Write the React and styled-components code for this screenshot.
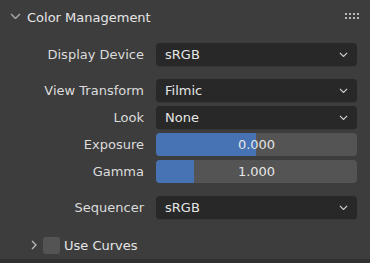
import styled, { createGlobalStyle } from "styled-components"

const Global = createGlobalStyle`
  body {
    margin: 0;
    background: #303030;
    font-family: "DejaVu Sans", "Liberation Sans", sans-serif;
    font-size: 13px;
  }
`

const Panel = styled.div`
  width: 370px;
  height: 259px;
  background: #3d3d3d;
  box-sizing: border-box;
`

const Header = styled.div`
  height: 32px;
  display: flex;
  align-items: center;
  padding-left: 10px;
  padding-right: 11px;
  color: #e6e6e6;
`

const HeaderTitle = styled.span`
  flex: 1;
  margin-left: 6px;
  padding-top: 2px;
`

const Body = styled.div`
  padding: 11px 13px 0 0;
`

const Group = styled.div`
  display: flex;
  flex-direction: column;
  gap: 4px;
  margin-bottom: 13px;
`

const Row = styled.div`
  display: flex;
  align-items: center;
  height: 23px;
`

const Label = styled.div`
  width: 144px;
  text-align: right;
  color: #dcdcdc;
  margin-right: 12px;
  white-space: nowrap;
`

const Dropdown = styled.div`
  flex: 1;
  height: 100%;
  background: #282828;
  border-radius: 4px;
  display: flex;
  align-items: center;
  padding: 0 9px 0 9px;
  color: #e6e6e6;
  box-shadow: 0 1px 0 #363636;
`

const DropText = styled.span`
  flex: 1;
`

const Slider = styled.div`
  position: relative;
  flex: 1;
  height: 100%;
  background: #545454;
  border-radius: 4px;
  overflow: hidden;
  display: flex;
  align-items: center;
  justify-content: center;
  color: #e6e6e6;
`

const Fill = styled.div`
  position: absolute;
  left: 0;
  top: 0;
  bottom: 0;
  background: #4772b3;
`

const SliderValue = styled.span`
  position: relative;
`

const SubHeader = styled.div`
  display: flex;
  align-items: center;
  height: 20px;
  padding-left: 31px;
  margin-top: 16px;
  color: #e6e6e6;
`

const Checkbox = styled.div`
  width: 17px;
  height: 17px;
  border-radius: 3px;
  background: #545454;
  margin-left: 6px;
  margin-right: 4px;
`

const ChevronDown = ({ size = 9, color = "#cfcfcf" }) => (
  <svg width={size} height={size * 0.6} viewBox="0 0 10 6">
    <path d="M1 1 L5 5 L9 1" fill="none" stroke={color} strokeWidth="1.3" />
  </svg>
)

const ChevronRight = () => (
  <svg width="6" height="10" viewBox="0 0 6 10">
    <path d="M1 1 L5 5 L1 9" fill="none" stroke="#bdbdbd" strokeWidth="1.3" />
  </svg>
)

const Grip = () => (
  <svg width="14" height="6" viewBox="0 0 14 6">
    {[0, 4, 8, 12].map((x) =>
      [0, 4].map((y) => (
        <rect key={x + "-" + y} x={x} y={y} width="2" height="2" fill="#b8b8b8" />
      ))
    )}
  </svg>
)

const Select = ({ label, value }) => (
  <Row>
    <Label>{label}</Label>
    <Dropdown>
      <DropText>{value}</DropText>
      <ChevronDown />
    </Dropdown>
  </Row>
)

const Number = ({ label, value, fraction }) => (
  <Row>
    <Label>{label}</Label>
    <Slider>
      <Fill style={{ width: `${fraction * 100}%` }} />
      <SliderValue>{value}</SliderValue>
    </Slider>
  </Row>
)

const App = () => {
  return (
    <>
      <Global />
      <Panel>
        <Header>
          <ChevronDown size={11} color="#a8a8a8" />
          <HeaderTitle>Color Management</HeaderTitle>
          <Grip />
        </Header>
        <Body>
          <Group>
            <Select label="Display Device" value="sRGB" />
          </Group>
          <Group>
            <Select label="View Transform" value="Filmic" />
            <Select label="Look" value="None" />
            <Number label="Exposure" value="0.000" fraction={0.497} />
            <Number label="Gamma" value="1.000" fraction={0.19} />
          </Group>
          <Group>
            <Select label="Sequencer" value="sRGB" />
          </Group>
        </Body>
        <SubHeader>
          <ChevronRight />
          <Checkbox />
          <span>Use Curves</span>
        </SubHeader>
      </Panel>
    </>
  )
}

export default App
